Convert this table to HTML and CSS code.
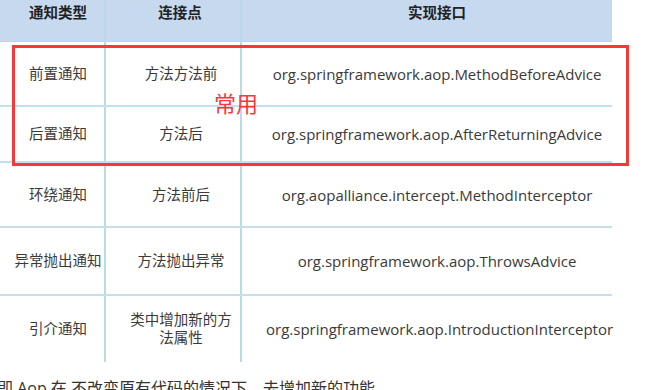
FILE: index.html
```html
<!DOCTYPE html>
<html lang="zh-CN">
<head>
    <meta charset="UTF-8">
    <meta name="viewport" content="width=device-width, initial-scale=1.0">
    <title>通知类型</title>
    <link rel="stylesheet" href="styles.css">
</head>
<body>
    <div class="page">
        <table class="advice-table">
            <colgroup>
                <col class="col-type">
                <col class="col-point">
                <col class="col-iface">
            </colgroup>
            <thead>
                <tr>
                    <th>通知类型</th>
                    <th>连接点</th>
                    <th>实现接口</th>
                </tr>
            </thead>
            <tbody>
                <tr class="row-a">
                    <td>前置通知</td>
                    <td>方法方法前</td>
                    <td>org.springframework.aop.MethodBeforeAdvice</td>
                </tr>
                <tr class="row-b">
                    <td>后置通知</td>
                    <td>方法后</td>
                    <td>org.springframework.aop.AfterReturningAdvice</td>
                </tr>
                <tr class="row-a">
                    <td>环绕通知</td>
                    <td>方法前后</td>
                    <td>org.aopalliance.intercept.MethodInterceptor</td>
                </tr>
                <tr class="row-c">
                    <td>异常抛出通知</td>
                    <td>方法抛出异常</td>
                    <td>org.springframework.aop.ThrowsAdvice</td>
                </tr>
                <tr class="row-c">
                    <td>引介通知</td>
                    <td>类中增加新的方法属性</td>
                    <td>org.springframework.aop.IntroductionInterceptor</td>
                </tr>
            </tbody>
        </table>

        <!-- hand-drawn highlight over the first two rows -->
        <div class="highlight"></div>
        <span class="highlight-label">常用</span>

        <p class="note">即 Aop 在 不改变原有代码的情况下，去增加新的功能</p>
    </div>
</body>
</html>
```

FILE: styles.css
```css
body {
    margin: 0;
    padding: 0;
    background: #fff;
    font-family: "Open Sans", "Noto Sans CJK SC", sans-serif;
    overflow: hidden;
}
.page {
    position: relative;
    width: 647px;
    height: 390px;
}
.advice-table {
    width: 612px;
    table-layout: fixed;
    border-collapse: collapse;
    font-size: 14.5px;
    color: #3a3a3a;
}
.col-type {
    width: 105px;
}
.col-point {
    width: 136px;
}
.col-iface {
    width: 371px;
}
.advice-table th,
.advice-table td {
    text-align: center;
    padding: 0 4px 0 18px;
    border-bottom: 2px solid #c3e0eb;
    line-height: 18px;
}
.advice-table th + th,
.advice-table td + td {
    border-left: 2px solid #b9dbe8;
}
.advice-table th:first-child,
.advice-table td:first-child {
    padding-left: 12px;
    padding-right: 0;
}
.advice-table th:last-child,
.advice-table td:last-child {
    padding-left: 24px;
}
.advice-table td:last-child {
    font-size: 15px;
}
.advice-table th {
    height: 37px;
    vertical-align: top;
    padding-top: 4px;
    background: #c6d9ef;
    color: #222;
    font-weight: bold;
    border-bottom: 1px solid #b3d8e6;
}
.row-a td {
    height: 63px;
}
.row-b td {
    height: 54px;
}
.row-c td {
    height: 66px;
}
.advice-table tbody tr:last-child td {
    border-bottom: none;
}
.advice-table td:nth-child(2) {
    padding-left: 22px;
    padding-right: 6px;
}
.highlight {
    position: absolute;
    left: 12px;
    top: 45px;
    width: 611px;
    height: 115px;
    border: 3px solid #f53838;
}
.highlight-label {
    position: absolute;
    left: 214px;
    top: 88px;
    font-size: 22px;
    line-height: 28px;
    color: #f53838;
    font-family: "Noto Sans CJK SC", sans-serif;
}
.note {
    margin: 14px 0 0 -3px;
    font-size: 16px;
    line-height: 24px;
    color: #333;
}
```
